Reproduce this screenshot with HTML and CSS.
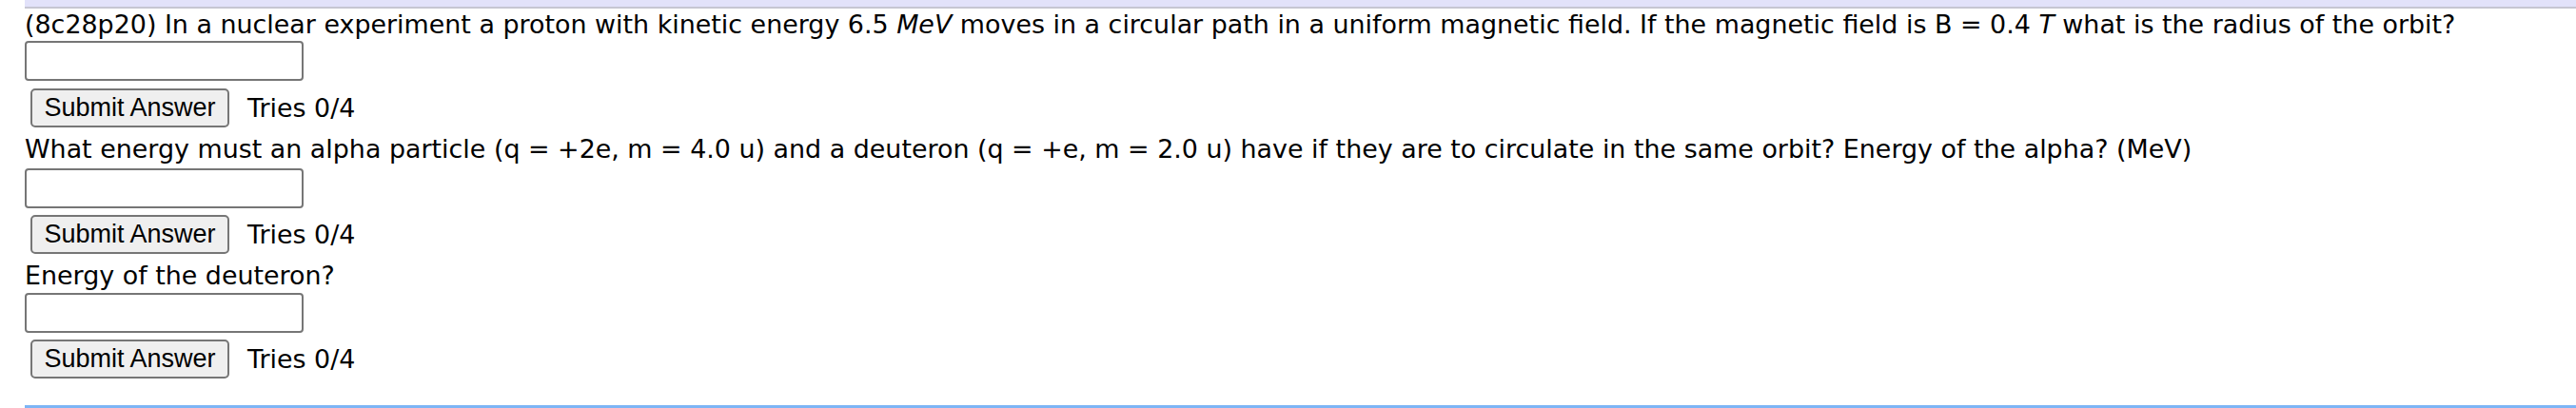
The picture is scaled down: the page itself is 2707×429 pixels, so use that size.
FILE: index.html
```html
<!DOCTYPE html>
<html>
<head>
<meta charset="utf-8">
<link rel="stylesheet" href="styles.css">
</head>
<body>
<div class="page">
  <div class="topbar"></div>
  <div class="problem">
    <p class="q q1">(8c28p20) In a nuclear experiment a proton with kinetic energy 6.5 <i>MeV</i> moves in a circular path in a uniform magnetic field. If the magnetic field is B = 0.4 <i>T</i> what is the radius of the orbit?</p>
    <input class="answer a1" type="text">
    <div class="submit-row r1">
      <button class="submit" type="button">Submit Answer</button>
      <span class="tries">Tries 0/4</span>
    </div>
    <p class="q q2">What energy must an alpha particle (q = +2e, m = 4.0 u) and a deuteron (q = +e, m = 2.0 u) have if they are to circulate in the same orbit? Energy of the alpha? (MeV)</p>
    <input class="answer a2" type="text">
    <div class="submit-row r2">
      <button class="submit" type="button">Submit Answer</button>
      <span class="tries">Tries 0/4</span>
    </div>
    <p class="q q3">Energy of the deuteron?</p>
    <input class="answer a3" type="text">
    <div class="submit-row r3">
      <button class="submit" type="button">Submit Answer</button>
      <span class="tries">Tries 0/4</span>
    </div>
  </div>
  <div class="bottombar"></div>
</div>
</body>
</html>
```
FILE: styles.css
```css
html, body {
  margin: 0;
  padding: 0;
  background: #ffffff;
}
.page {
  margin-left: 26px;
  font-family: "DejaVu Sans", Verdana, sans-serif;
  font-size: 26.9px;
  color: #000000;
}
.topbar {
  height: 7px;
  background: #e2e2fa;
  border-bottom: 2px solid #c6c6d2;
}
.problem {
  display: flex;
  flex-direction: column;
  align-items: flex-start;
}
.q {
  margin: 0;
  line-height: 30px;
  white-space: nowrap;
}
.q1 { margin-top: 2px; }
.q2 { margin-top: 8px; }
.q3 { margin-top: 8px; }
.answer {
  box-sizing: border-box;
  width: 293px;
  height: 42px;
  margin: 0;
  border: 2px solid #767676;
  border-radius: 4px;
  background: #ffffff;
  font-size: 26px;
  padding: 0 6px;
}
.a1 { margin-top: 2px; }
.a2 { margin-top: 5px; }
.a3 { margin-top: 3px; }
.submit-row {
  display: flex;
  align-items: center;
  margin-left: 6px;
}
.r1 { margin-top: 8px; }
.r2 { margin-top: 7px; }
.r3 { margin-top: 7px; }
.submit {
  box-sizing: border-box;
  width: 209px;
  height: 41px;
  margin: 0;
  padding: 0;
  border: 2px solid #767676;
  border-radius: 5px;
  background: #efefef;
  color: #000000;
  font-family: "Liberation Sans", Arial, sans-serif;
  font-size: 27px;
}
.tries {
  margin-left: 19px;
  line-height: 30px;
}
.bottombar {
  margin-top: 28px;
  height: 3px;
  background: #7db5f5;
}
```
